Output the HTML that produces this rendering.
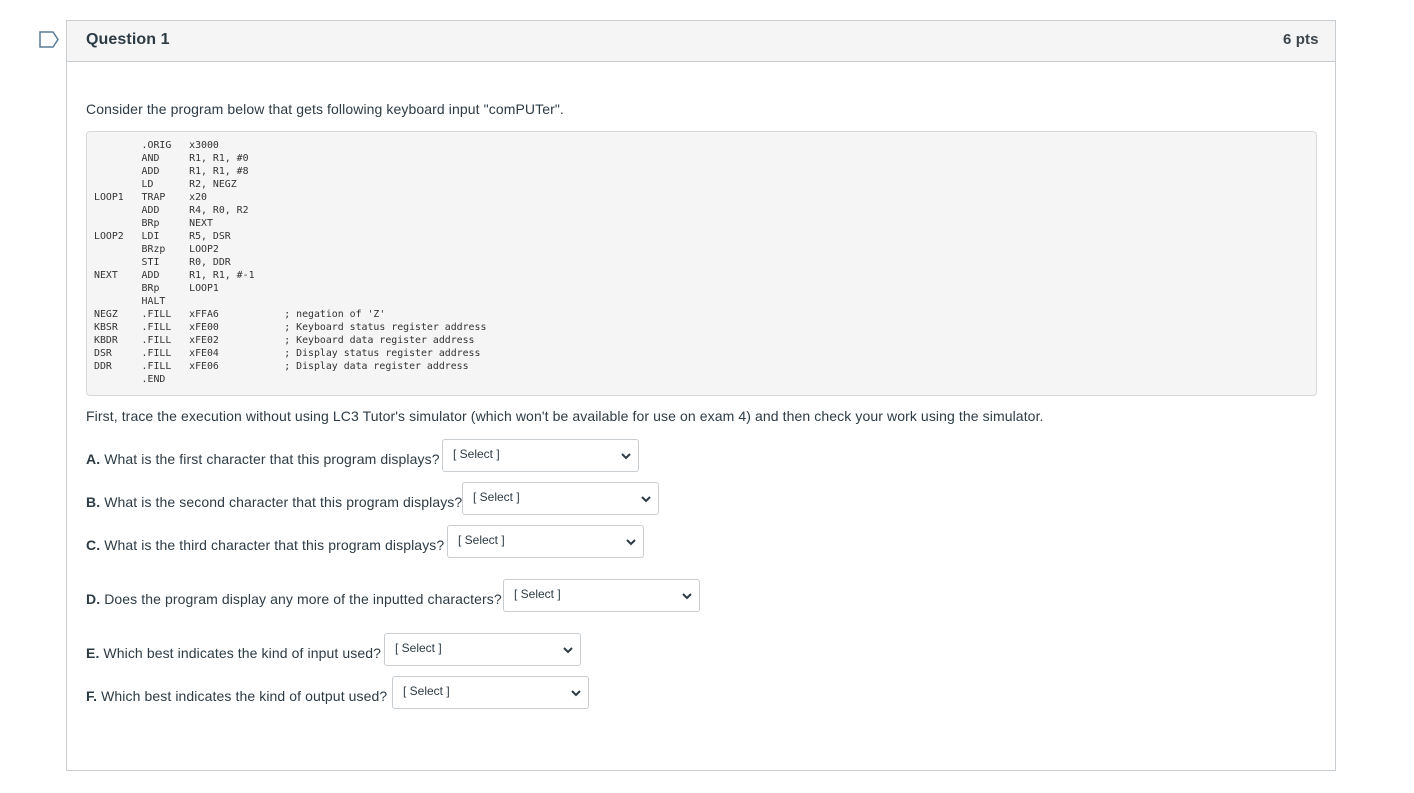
<!DOCTYPE html>
<html><head><meta charset="utf-8">
<style>
body{margin:0;width:1414px;height:793px;background:#fff;position:relative;font-family:"Liberation Sans",sans-serif;color:#2d3b45;overflow:hidden}
.panel{position:absolute;left:66px;top:20px;width:1268px;height:749px;border:1px solid #c7cdd1}
.hdr{position:absolute;left:0;top:0;width:1268px;height:40px;background:#f5f5f5;border-bottom:1px solid #c7cdd1}
.t{position:absolute;white-space:nowrap;font-size:14px;line-height:16px;letter-spacing:0.1px}
.code{position:absolute;left:86px;top:131px;width:1229px;height:263px;background:#f5f5f5;border:1px solid #d9d9d9;border-radius:4px}
pre{position:absolute;left:94px;top:139px;margin:0;font-family:"DejaVu Sans Mono",monospace;font-size:9.9px;line-height:13px;color:#333}
.sel{position:absolute;width:197px;height:33px;border:1px solid #c7cdd1;border-radius:3px;background:#fff;box-sizing:border-box}
.sel span{position:absolute;left:10px;top:7px;font-size:12px;color:#2d3b45}
.sel svg{position:absolute;right:6px;top:12px}
</style></head><body>
<svg style="position:absolute;left:39px;top:31px" width="21" height="18"><path d="M1 1H14L19 8.5L14 16H1Z" fill="none" stroke="#5b7c99" stroke-width="1.5"/></svg>
<div class="panel"><div class="hdr"></div></div>
<div class="t" style="left:86px;top:31px;font-size:16px;font-weight:bold;line-height:18px">Question 1</div>
<div class="t" style="left:1283px;top:31px;font-size:15px;font-weight:bold;line-height:18px;color:#3d454c">6 pts</div>
<div class="t" style="left:86px;top:101px">Consider the program below that gets following keyboard input "comPUTer".</div>
<div class="code"></div>
<pre>        .ORIG   x3000
        AND     R1, R1, #0
        ADD     R1, R1, #8
        LD      R2, NEGZ
LOOP1   TRAP    x20
        ADD     R4, R0, R2
        BRp     NEXT
LOOP2   LDI     R5, DSR
        BRzp    LOOP2
        STI     R0, DDR
NEXT    ADD     R1, R1, #-1
        BRp     LOOP1
        HALT
NEGZ    .FILL   xFFA6           ; negation of 'Z'
KBSR    .FILL   xFE00           ; Keyboard status register address
KBDR    .FILL   xFE02           ; Keyboard data register address
DSR     .FILL   xFE04           ; Display status register address
DDR     .FILL   xFE06           ; Display data register address
        .END</pre>
<div class="t" style="left:86px;top:408px">First, trace the execution without using LC3 Tutor's simulator (which won't be available for use on exam 4) and then check your work using the simulator.</div>

<div class="t" style="left:86px;top:451px"><b>A.</b> What is the first character that this program displays?</div>
<div class="sel" style="left:442px;top:439px"><span>[ Select ]</span><svg width="12" height="8"><path d="M2 2L6 6L10 2" fill="none" stroke="#2d3b45" stroke-width="2"/></svg></div>
<div class="t" style="left:86px;top:494px"><b>B.</b> What is the second character that this program displays?</div>
<div class="sel" style="left:462px;top:482px"><span>[ Select ]</span><svg width="12" height="8"><path d="M2 2L6 6L10 2" fill="none" stroke="#2d3b45" stroke-width="2"/></svg></div>
<div class="t" style="left:86px;top:537px"><b>C.</b> What is the third character that this program displays?</div>
<div class="sel" style="left:447px;top:525px"><span>[ Select ]</span><svg width="12" height="8"><path d="M2 2L6 6L10 2" fill="none" stroke="#2d3b45" stroke-width="2"/></svg></div>
<div class="t" style="left:86px;top:591px"><b>D.</b> Does the program display any more of the inputted characters?</div>
<div class="sel" style="left:503px;top:579px"><span>[ Select ]</span><svg width="12" height="8"><path d="M2 2L6 6L10 2" fill="none" stroke="#2d3b45" stroke-width="2"/></svg></div>
<div class="t" style="left:86px;top:645px"><b>E.</b> Which best indicates the kind of input used?</div>
<div class="sel" style="left:384px;top:633px"><span>[ Select ]</span><svg width="12" height="8"><path d="M2 2L6 6L10 2" fill="none" stroke="#2d3b45" stroke-width="2"/></svg></div>
<div class="t" style="left:86px;top:688px"><b>F.</b> Which best indicates the kind of output used?</div>
<div class="sel" style="left:392px;top:676px"><span>[ Select ]</span><svg width="12" height="8"><path d="M2 2L6 6L10 2" fill="none" stroke="#2d3b45" stroke-width="2"/></svg></div>
</body></html>
